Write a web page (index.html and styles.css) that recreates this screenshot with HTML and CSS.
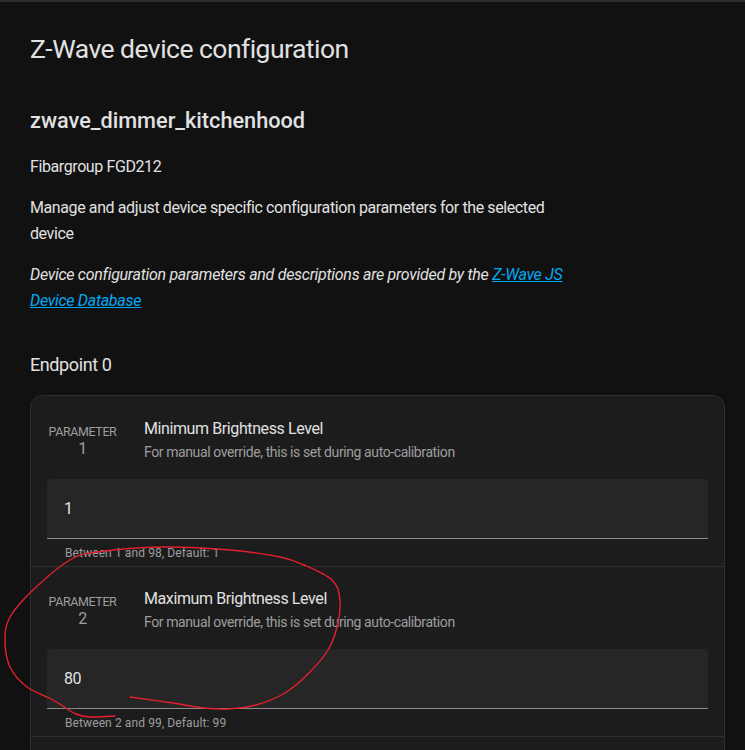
FILE: index.html
```html
<!DOCTYPE html>
<html lang="en">
<head>
<meta charset="utf-8">
<title>Z-Wave device configuration</title>
<link rel="stylesheet" href="styles.css">
</head>
<body>
<div class="topbar"></div>
<main class="page">
  <h1 class="title">Z-Wave device configuration</h1>
  <h2 class="device-name">zwave_dimmer_kitchenhood</h2>
  <p class="text">Fibargroup FGD212</p>
  <p class="text">Manage and adjust device specific configuration parameters for the selected device</p>
  <p class="text note">Device configuration parameters and descriptions are provided by the <a class="link" href="#">Z-Wave JS Device Database</a></p>
  <h3 class="endpoint">Endpoint 0</h3>
  <section class="card">
    <div class="param-row">
      <div class="param-head">
        <div class="prefix">
          <div class="prefix-label">Parameter</div>
          <div class="prefix-num">1</div>
        </div>
        <div class="param-info">
          <div class="param-title">Minimum Brightness Level</div>
          <div class="param-desc">For manual override, this is set during auto-calibration</div>
        </div>
      </div>
      <div class="field">1</div>
      <div class="helper">Between 1 and 98, Default: 1</div>
    </div>
    <div class="param-row">
      <div class="param-head">
        <div class="prefix">
          <div class="prefix-label">Parameter</div>
          <div class="prefix-num">2</div>
        </div>
        <div class="param-info">
          <div class="param-title">Maximum Brightness Level</div>
          <div class="param-desc">For manual override, this is set during auto-calibration</div>
        </div>
      </div>
      <div class="field">80</div>
      <div class="helper">Between 2 and 99, Default: 99</div>
    </div>
    <div class="param-row param-row-more"></div>
  </section>
</main>
<svg class="annotation" width="745" height="750" viewBox="0 0 745 750" aria-hidden="true">
  <path d="M115,716 C111.2,716.2 98.5,717.3 92,717 C85.5,716.7 82.5,716.8 76,714 C69.5,711.2 61.2,704.5 53,700 C44.8,695.5 34.2,692.5 27,687 C19.8,681.5 13.7,674.8 10,667 C6.3,659.2 5,648.3 5,640 C5,631.7 5.3,625.3 10,617 C14.7,608.7 23,599.5 33,590 C43,580.5 59.3,566.3 70,560 C80.7,553.7 81.5,554.2 97,552 C112.5,549.8 140.8,547.3 163,547 C185.2,546.7 210.5,548.3 230,550 C249.5,551.7 267.7,554.5 280,557 C292.3,559.5 295.3,561.2 304,565 C312.7,568.8 326,574.2 332,580 C338,585.8 339.2,592.2 340,600 C340.8,607.8 339,618.7 337,627 C335,635.3 332.7,642.3 328,650 C323.3,657.7 316.2,665.8 309,673 C301.8,680.2 293.8,687.7 285,693 C276.2,698.3 265.5,702.3 256,705 C246.5,707.7 236.7,708.5 228,709 C219.3,709.5 213.2,709 204,708 C194.8,707 185.3,704.8 173,703 C160.7,701.2 137.2,698 130,697" />
</svg>
</body>
</html>
```

FILE: styles.css
```css
html, body {
  margin: 0;
  padding: 0;
  background: #111111;
}

body {
  position: relative;
  width: 745px;
  height: 750px;
  overflow: hidden;
  font-family: Roboto, "Noto Sans", sans-serif;
  letter-spacing: -0.025em;
  color: #e1e1e1;
}

.topbar {
  height: 2px;
  background: #2b2b2b;
}

.page {
  padding: 0 20px 0 30px;
}

.title {
  margin: 29px 0 40px;
  font-size: 26.5px;
  line-height: 36px;
  font-weight: 400;
  letter-spacing: -0.02em;
  color: #e1e1e1;
}

.device-name {
  margin: 0 0 19px;
  font-size: 21.7px;
  line-height: 28px;
  font-weight: 500;
  letter-spacing: 0;
  color: #e1e1e1;
}

.text {
  margin: 0 0 15px;
  max-width: 560px;
  font-size: 16px;
  line-height: 26px;
  color: #e1e1e1;
}

.note {
  font-style: italic;
  letter-spacing: -0.018em;
}

.link {
  color: #03a9f4;
  text-decoration: underline;
}

.endpoint {
  margin: 39px 0 18px;
  font-size: 18px;
  line-height: 24px;
  font-weight: 400;
  color: #e1e1e1;
}

.card {
  background: #1c1c1c;
  border: 1px solid #2e2e2e;
  border-radius: 12px;
  padding-top: 1px;
}

.param-row {
  padding: 20px 16px 5px;
  border-bottom: 1px solid #2e2e2e;
}

.param-row-more {
  height: 60px;
  border-bottom: none;
}

.param-head {
  display: flex;
  align-items: center;
}

.prefix {
  width: 71px;
  margin-right: 26px;
  text-align: center;
  color: #9e9e9e;
}

.prefix-label {
  font-size: 12.5px;
  line-height: 18px;
  text-transform: uppercase;
}

.prefix-num {
  font-size: 16px;
  line-height: 16px;
}

.param-title {
  font-size: 16px;
  line-height: 24px;
  color: #e1e1e1;
}

.param-desc {
  font-size: 14px;
  line-height: 22px;
  color: #9e9e9e;
}

.field {
  box-sizing: border-box;
  height: 60px;
  margin-top: 16px;
  padding: 0 17px;
  display: flex;
  align-items: center;
  background: #262626;
  border-radius: 4px 4px 0 0;
  border-bottom: 1px solid #8a8a8a;
  font-size: 16px;
  color: #e1e1e1;
}

.helper {
  margin-top: 6px;
  padding: 0 18px;
  font-size: 12px;
  line-height: 16px;
  letter-spacing: 0.1px;
  color: #9e9e9e;
}

.annotation {
  position: absolute;
  top: 0;
  left: 0;
  pointer-events: none;
}

.annotation path {
  fill: none;
  stroke: #e3202f;
  stroke-width: 1.4;
  stroke-linecap: round;
}
```
